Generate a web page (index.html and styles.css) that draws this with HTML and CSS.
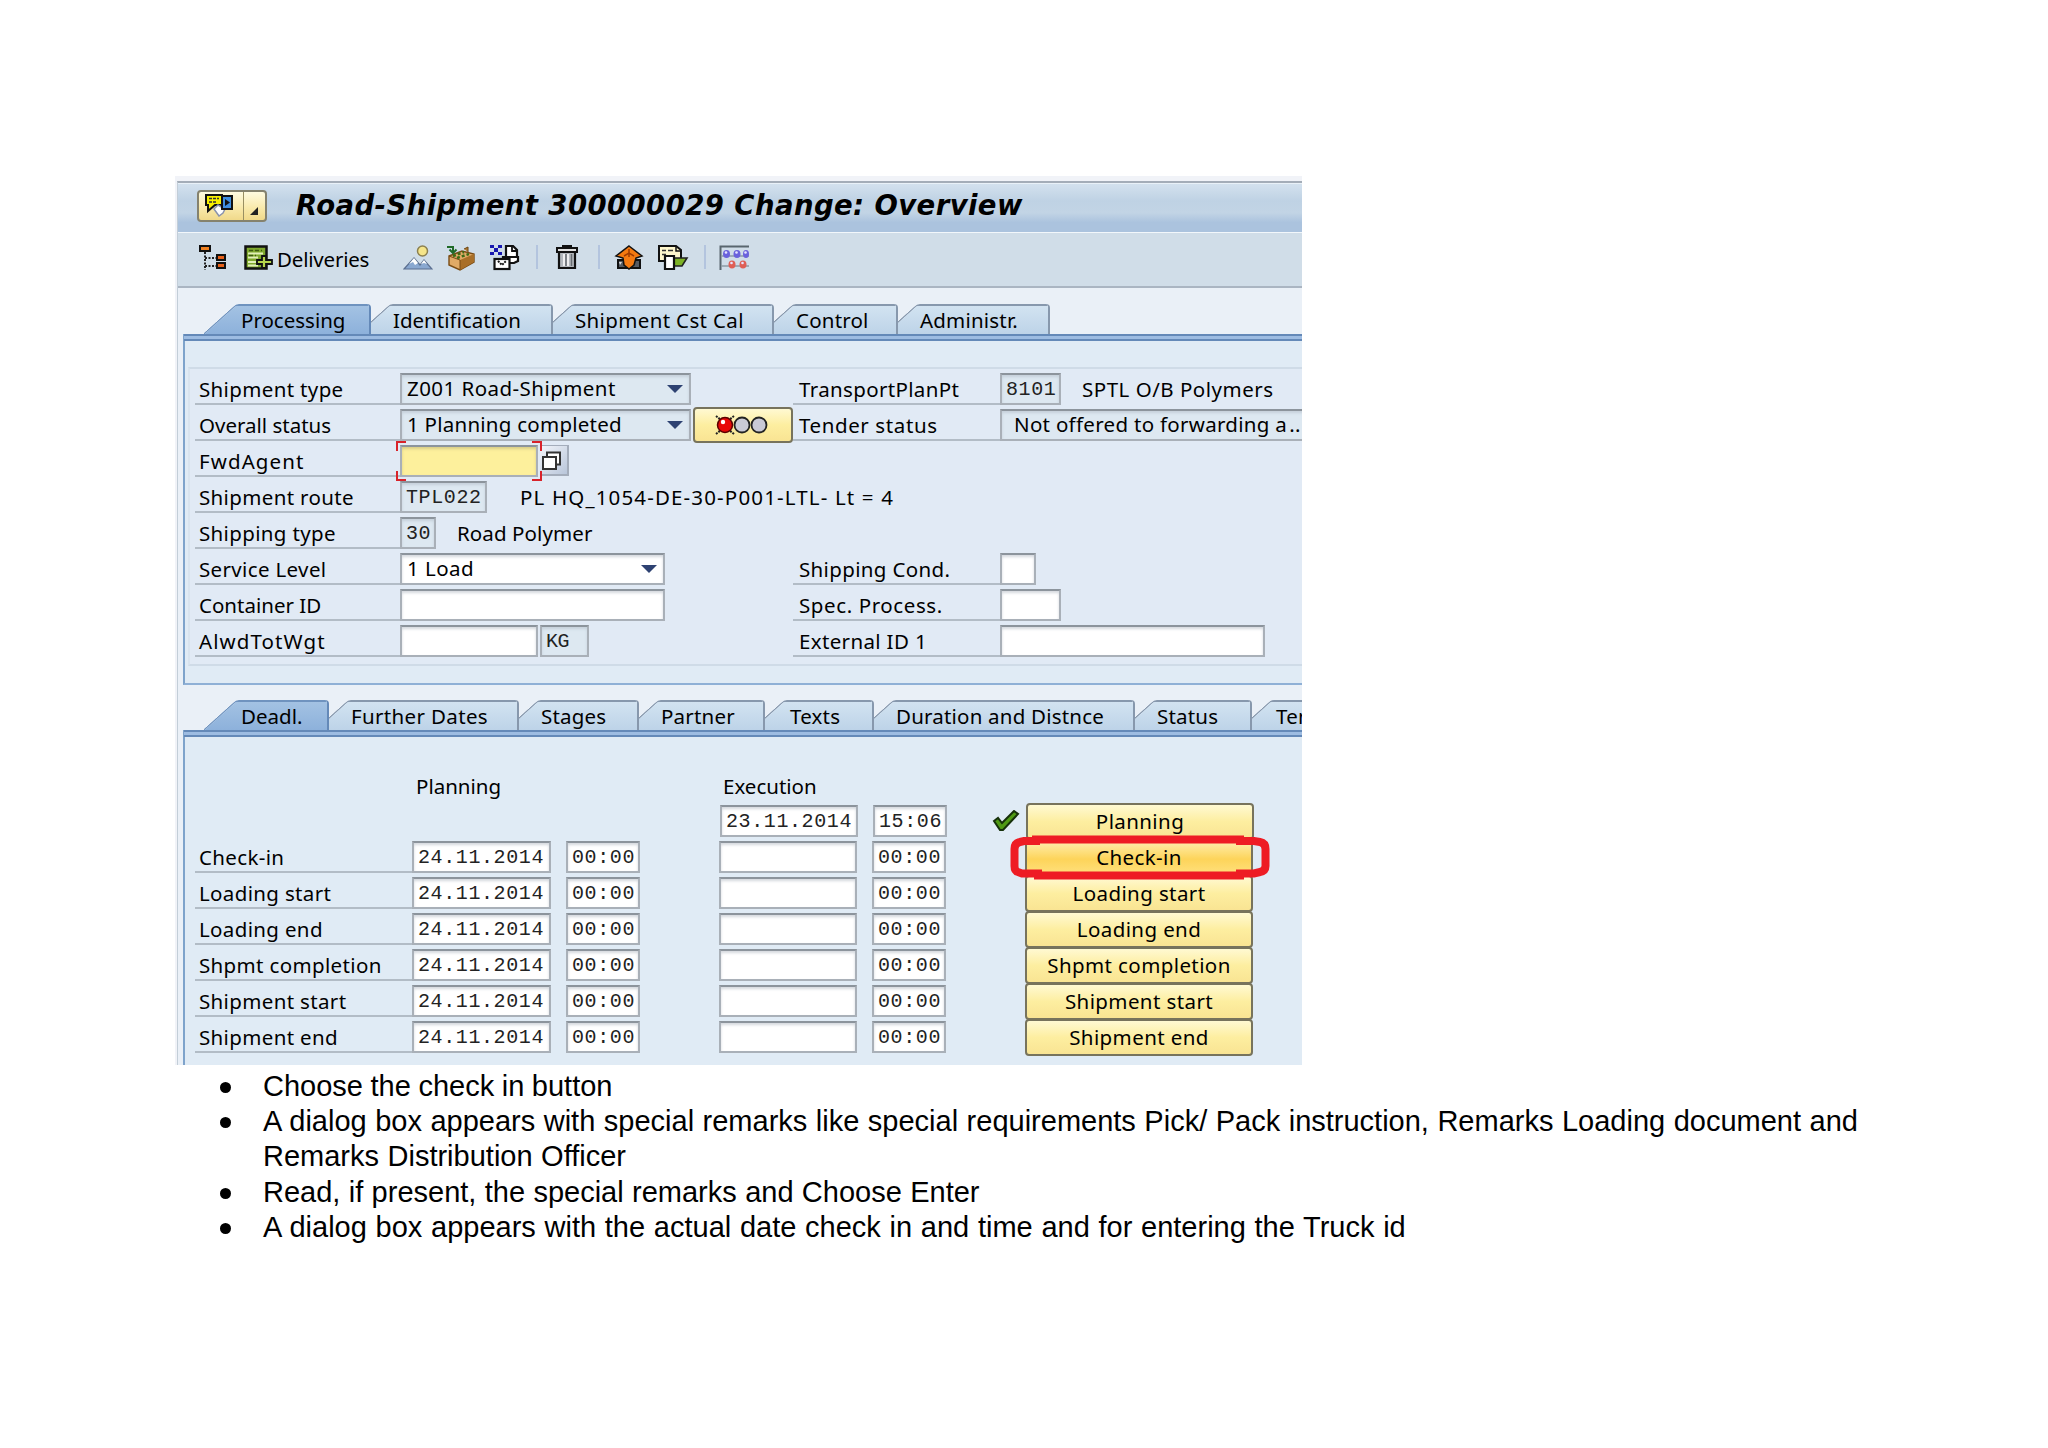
FILE: index.html
```html
<!DOCTYPE html>
<html lang="en">
<head>
    <meta charset="UTF-8">
    <meta name="viewport" content="width=device-width, initial-scale=1.0">
    <title>Road-Shipment 300000029 Change: Overview</title>
    <link rel="stylesheet" href="styles.css">
</head>
<body>
    <div class="screen">
        <div class="window">
            <div class="titlebar">
                <div class="menu-button">
                    <svg class="menu-icon" width="30" height="24" viewBox="0 0 30 24">
                        <path d="M2 2H18V12H11L4 18V12H2Z" fill="#f8f000" stroke="#111" stroke-width="2"/>
                        <path d="M5 5.500H15M5 9H12" stroke="#333" stroke-width="1.500" stroke-dasharray="3 1"/>
                        <path d="M10 16L14 12L21 16L19 20L15 23Z" fill="#fff" stroke="#8a93ad" stroke-width="1.500"/>
                        <rect x="18" y="3" width="10" height="13" fill="#3f8ee0" stroke="#111" stroke-width="2"/>
                        <path d="M21 6V13L26 9.500Z" fill="#111"/>
                    </svg>
                    <span class="menu-corner"><svg width="8" height="8" viewBox="0 0 8 8"><path d="M8 0V8H0Z" fill="#222"/></svg></span>
                </div>
                <h1>Road-Shipment 300000029 Change: Overview</h1>
            </div>

            <div class="toolbar">
                <svg class="icon-tree" width="28" height="26" viewBox="0 0 28 26">
                    <path d="M6 7V25M6 13H18M6 21H18" stroke="#222" stroke-width="2" stroke-dasharray="2 1.500" fill="none"/>
                    <rect x="1" y="1" width="10" height="5" fill="#f08020" stroke="#111" stroke-width="2"/>
                    <rect x="18" y="10" width="8" height="5" fill="#e86018" stroke="#111" stroke-width="2"/>
                    <rect x="18" y="18" width="8" height="5" fill="#e86018" stroke="#111" stroke-width="2"/>
                </svg>
                <svg class="icon-list" width="30" height="26" viewBox="0 0 30 26">
                    <rect x="1.500" y="1.500" width="21" height="22" fill="#7fa82e" stroke="#111" stroke-width="2.500"/>
                    <path d="M4 8.500H19M4 12.500H14M4 17H12M4 20.500H14" stroke="#e2f0b8" stroke-width="2"/>
                    <path d="M5 5.500H18M5 10.500H12" stroke="#3c5c10" stroke-width="1.500" stroke-dasharray="4 2"/>
                    <path d="M18 11H22V15H28V19H22V23H18V19H13V15H18Z" fill="#b5d54c" stroke="#111" stroke-width="1.800"/>
                </svg>
                <span class="tool-text">Deliveries</span>
                <svg class="icon-picture" width="30" height="26" viewBox="0 0 30 26">
                    <circle cx="19.500" cy="6" r="5" fill="#f5e58a" stroke="#8c8050" stroke-width="1.500"/>
                    <path d="M1 24L11 13L17 20L21 15L29 24Z" fill="#8aa8d0" stroke="#5b6f90" stroke-width="1.200"/>
                    <path d="M11 13L6 19L10 17L12 20L15 18ZM21 15L18 19L21 18L24 19Z" fill="#fff"/>
                </svg>
                <svg class="icon-box" width="30" height="26" viewBox="0 0 30 26">
                    <path d="M3 11L16 6L28 9V17L14 25L3 20Z" fill="#e0aa66" stroke="#7a4c14" stroke-width="1.400"/>
                    <path d="M14 15L28 9V17L14 25Z" fill="#a96f28"/>
                    <path d="M3 11L14 15V25" fill="none" stroke="#7a4c14"/>
                    <path d="M7 11L18 7M11 13L23 9" stroke="#3d6b16" stroke-width="2.500" stroke-dasharray="3 2"/>
                    <path d="M18 4L22 2V7" fill="#b07a30" stroke="#6b4410"/>
                    <path d="M1 2H7V7M3.500 4.500L7 8L10.500 4.500" fill="none" stroke="#1f6a28" stroke-width="2"/>
                </svg>
                <svg class="icon-print" width="30" height="26" viewBox="0 0 30 26">
                    <path d="M0 0H4V3H0ZM8 0H12V3H8ZM4 3H8V7H4ZM0 7H4V10H0ZM8 7H12V10H8Z" fill="#1818b0"/>
                    <path d="M16 12V1H23L27 5V12" fill="#fff" stroke="#111" stroke-width="2.200"/>
                    <path d="M22 1V6H27" fill="none" stroke="#111" stroke-width="1.800"/>
                    <path d="M13 12H28V16L24 18H13Z" fill="#fff" stroke="#111" stroke-width="2.200"/>
                    <rect x="4.500" y="14" width="15" height="10" fill="#fff" stroke="#111" stroke-width="2.200"/>
                    <path d="M8 16L12 20L16 16" fill="none" stroke="#111" stroke-width="2" stroke-dasharray="2 1"/>
                </svg>
                <span class="sep sep-a"></span>
                <svg class="icon-trash" width="22" height="26" viewBox="0 0 22 26">
                    <path d="M7 3V1H15V3" fill="none" stroke="#111" stroke-width="2"/>
                    <rect x="1" y="3" width="20" height="4" fill="#e0e0e0" stroke="#111" stroke-width="2"/>
                    <path d="M3 7H19V23H3Z" fill="#b4b8bd" stroke="#111" stroke-width="2.200"/>
                    <path d="M8 9V21M12 9V21" stroke="#f4f4f4" stroke-width="1.800"/>
                    <path d="M10 9V21M15.500 9V21" stroke="#686c72" stroke-width="1.500"/>
                </svg>
                <span class="sep sep-b"></span>
                <svg class="icon-home" width="30" height="26" viewBox="0 0 30 26">
                    <rect x="4" y="15" width="22" height="8" fill="#555b62" stroke="#111" stroke-width="2"/>
                    <path d="M15 1L28 11L22 13L20 20L15 24L10 20L9 13L2 11Z" fill="#f57a10" stroke="#111" stroke-width="1.500"/>
                    <path d="M15 4V12M10 11L15 8L20 11" stroke="#a03c00" stroke-width="1.500" fill="none"/>
                    <path d="M5 17H8L6 20Z" fill="#ddd"/>
                </svg>
                <svg class="icon-copy" width="32" height="26" viewBox="0 0 32 26">
                    <path d="M2 1H19L24 5V16H2Z" fill="#fdf6cc" stroke="#111" stroke-width="2"/>
                    <path d="M19 1V6H24" fill="none" stroke="#111" stroke-width="1.500"/>
                    <path d="M5 5.500H9M5 9.500H9M11 5.500H16" stroke="#333" stroke-width="1.500"/>
                    <path d="M14 13H30L25 21H14Z" fill="#7db226" stroke="#222" stroke-width="1.600"/>
                    <path d="M8 11H17V24H8Z" fill="#fff" stroke="#111" stroke-width="2.200"/>
                </svg>
                <span class="sep sep-c"></span>
                <svg class="icon-abacus" width="30" height="26" viewBox="0 0 30 26">
                    <path d="M1.500 25V1.500H30" fill="none" stroke="#59666e" stroke-width="2"/>
                    <path d="M2 11H30M2 21H30" stroke="#8c9aa4" stroke-width="1.500"/>
                    <g fill="#6a62dc"><ellipse cx="7.500" cy="9" rx="3.500" ry="4"/><ellipse cx="18" cy="9" rx="3.500" ry="4"/><ellipse cx="27" cy="9" rx="3" ry="4"/></g>
                    <g fill="#df5f55"><ellipse cx="13" cy="19.500" rx="3.500" ry="4"/><ellipse cx="24" cy="19.500" rx="3.500" ry="4"/></g>
                    <g fill="#e6e4ff"><circle cx="7" cy="7.500" r="1.300"/><circle cx="17.500" cy="7.500" r="1.300"/><circle cx="26.500" cy="7.500" r="1.300"/><circle cx="12.500" cy="18" r="1.300"/><circle cx="23.500" cy="18" r="1.300"/></g>
                </svg>
            </div>

            <div class="tabs tabs-top">
                <div class="tab active w-processing"><span>Processing</span></div>
                <div class="tab w-ident"><span>Identification</span></div>
                <div class="tab w-cost"><span>Shipment Cst Cal</span></div>
                <div class="tab w-control"><span>Control</span></div>
                <div class="tab w-admin"><span>Administr.</span></div>
            </div>
            <div class="panel panel-top">
                <div class="group">
                    <div class="col col-left">
                        <div class="row">
                            <label>Shipment type</label>
                            <div class="field readonly select w-type">Z001 Road-Shipment</div>
                        </div>
                        <div class="row">
                            <label class="tight">Overall status</label>
                            <div class="field readonly select w-type tight">1 Planning completed</div>
                            <button class="lights">
                                <svg width="54" height="20" viewBox="0 0 54 20">
                                    <circle cx="44" cy="10" r="7.500" fill="#c9c9d6" stroke="#222" stroke-width="1.800"/>
                                    <circle cx="27" cy="10" r="7.500" fill="#c9c9d6" stroke="#222" stroke-width="1.800"/>
                                    <path d="M1 1L6 5M19 1L14 5M1 19L6 15M19 19L14 15" stroke="#222" stroke-width="2" stroke-dasharray="2 1"/>
                                    <circle cx="10" cy="10" r="7.500" fill="#e80808" stroke="#5a0000" stroke-width="1.500"/>
                                    <circle cx="8" cy="7" r="2.200" fill="#fff"/>
                                </svg>
                            </button>
                        </div>
                        <div class="row">
                            <label class="wide">FwdAgent</label>
                            <div class="field focus w-agent">
                                <svg class="brackets" width="146" height="40" viewBox="0 0 146 40"><path d="M1 10V1H10M136 1H145V10M145 30V39H136M10 39H1V30" fill="none" stroke="#d8232a" stroke-width="2"/></svg>
                            </div>
                            <div class="match">
                                <svg width="22" height="20" viewBox="0 0 22 20"><rect x="6" y="1.500" width="13" height="12" fill="#fff" stroke="#333" stroke-width="2"/><rect x="2" y="6" width="13" height="12" fill="#fff" stroke="#333" stroke-width="2"/></svg>
                            </div>
                        </div>
                        <div class="row">
                            <label>Shipment route</label>
                            <div class="field readonly mono w-route">TPL022</div>
                            <span class="desc desc-route">PL HQ_1054-DE-30-P001-LTL- Lt = 4</span>
                        </div>
                        <div class="row">
                            <label>Shipping type</label>
                            <div class="field readonly mono w-two">30</div>
                            <span class="desc desc-road">Road Polymer</span>
                        </div>
                        <div class="row">
                            <label>Service Level</label>
                            <div class="field select w-level">1 Load</div>
                        </div>
                        <div class="row">
                            <label class="tight">Container ID</label>
                            <div class="field w-level"></div>
                        </div>
                        <div class="row">
                            <label class="wide">AlwdTotWgt</label>
                            <div class="field w-agent"></div>
                            <div class="field readonly mono unit">KG</div>
                        </div>
                    </div>
                    <div class="col col-right">
                        <div class="row">
                            <label>TransportPlanPt</label>
                            <div class="field readonly mono w-four">8101</div>
                            <span class="desc desc-plant">SPTL O/B Polymers</span>
                        </div>
                        <div class="row">
                            <label class="spaced">Tender status</label>
                            <div class="field readonly w-tender">Not offered to forwarding a<span class="dots">..</span></div>
                        </div>
                        <div class="row blank"></div>
                        <div class="row blank"></div>
                        <div class="row blank"></div>
                        <div class="row">
                            <label>Shipping Cond.</label>
                            <div class="field w-two"></div>
                        </div>
                        <div class="row">
                            <label class="spaced">Spec. Process.</label>
                            <div class="field w-four"></div>
                        </div>
                        <div class="row">
                            <label>External ID 1</label>
                            <div class="field w-external"></div>
                        </div>
                    </div>
                </div>
            </div>

            <div class="tabs tabs-bottom">
                <div class="tab active w-deadl"><span>Deadl.</span></div>
                <div class="tab w-dates"><span>Further Dates</span></div>
                <div class="tab w-stages"><span>Stages</span></div>
                <div class="tab w-partner"><span>Partner</span></div>
                <div class="tab w-texts"><span>Texts</span></div>
                <div class="tab w-duration"><span>Duration and Distnce</span></div>
                <div class="tab w-status"><span>Status</span></div>
                <div class="tab w-tender-tab"><span>Tender</span></div>
            </div>
            <div class="panel panel-bottom">
                <div class="headings">
                    <span>Planning</span>
                    <span>Execution</span>
                </div>
                <div class="deadline">
                    <label class="no-label"></label>
                    <div class="no-plan"></div>
                    <div class="field mono date exec">23.11.2014</div>
                    <div class="field mono time">15:06</div>
                    <svg class="check" width="28" height="22" viewBox="0 0 28 22"><path d="M2 11L6 8L10 13L22 1L26 4L11 20H8Z" fill="#4f9a14" stroke="#16300a" stroke-width="2"/></svg>
                    <button class="action">Planning</button>
                </div>
                <div class="deadline">
                    <label>Check-in</label>
                    <div class="field mono date plan">24.11.2014</div>
                    <div class="field mono time">00:00</div>
                    <div class="field mono date exec"></div>
                    <div class="field mono time">00:00</div>
                    <button class="action hover">Check-in</button>
                    <svg class="marker" width="260" height="45" viewBox="0 0 260 45"><path d="M26 4.500H230V6H244L250 7Q255.500 8 255.500 14V31Q255.500 36 250 37L244 38.500H230V40.500H28V38.500H12L8 37Q4.500 36 4.500 31V14Q4.500 8 10 7L14 6H26Z" fill="none" stroke="#ee1c24" stroke-width="8"/></svg>
                </div>
                <div class="deadline">
                    <label>Loading start</label>
                    <div class="field mono date plan">24.11.2014</div>
                    <div class="field mono time">00:00</div>
                    <div class="field mono date exec"></div>
                    <div class="field mono time">00:00</div>
                    <button class="action">Loading start</button>
                </div>
                <div class="deadline">
                    <label>Loading end</label>
                    <div class="field mono date plan">24.11.2014</div>
                    <div class="field mono time">00:00</div>
                    <div class="field mono date exec"></div>
                    <div class="field mono time">00:00</div>
                    <button class="action">Loading end</button>
                </div>
                <div class="deadline">
                    <label>Shpmt completion</label>
                    <div class="field mono date plan">24.11.2014</div>
                    <div class="field mono time">00:00</div>
                    <div class="field mono date exec"></div>
                    <div class="field mono time">00:00</div>
                    <button class="action">Shpmt completion</button>
                </div>
                <div class="deadline">
                    <label>Shipment start</label>
                    <div class="field mono date plan">24.11.2014</div>
                    <div class="field mono time">00:00</div>
                    <div class="field mono date exec"></div>
                    <div class="field mono time">00:00</div>
                    <button class="action">Shipment start</button>
                </div>
                <div class="deadline">
                    <label>Shipment end</label>
                    <div class="field mono date plan">24.11.2014</div>
                    <div class="field mono time">00:00</div>
                    <div class="field mono date exec"></div>
                    <div class="field mono time">00:00</div>
                    <button class="action">Shipment end</button>
                </div>
            </div>
        </div>
    </div>

    <ul class="steps">
        <li class="step-choose">Choose the check in button</li>
        <li class="step-remarks">A dialog box appears with special remarks like special requirements Pick/ Pack instruction, Remarks Loading document and<br>Remarks Distribution Officer</li>
        <li class="step-read">Read, if present, the special remarks and Choose Enter</li>
        <li class="step-truck">A dialog box appears with the actual date check in and time and for entering the Truck id</li>
    </ul>
</body>
</html>
```

FILE: styles.css
```css
*,
*::before,
*::after {
    box-sizing: border-box;
}

body {
    margin: 0;
    background: #fff;
    color: #000;
    font-family: "Noto Sans", sans-serif;
    font-size: 20.5px;
}

svg {
    display: block;
    flex: none;
}

.screen {
    margin: 176px 0 0 175px;
    width: 1127px;
    height: 889px;
    padding-top: 5px;
    background: #f1f3f8;
    overflow: hidden;
}

.window {
    height: 884px;
    margin-left: 2px;
    border-top: 2px solid #a4adb8;
    border-left: 1px solid #c3ced8;
    background: #eaf0f7;
    overflow: hidden;
}

/* Title bar */
.titlebar {
    display: flex;
    align-items: flex-start;
    height: 49px;
    padding: 6px 0 0 19px;
    background: linear-gradient(#d3e1ee, #bfd2e4 35%, #c2d4e5 60%, #abc3de 80%, #abc3de);
    border-top: 1px solid #e9f1f8;
}

.menu-button {
    display: flex;
    width: 70px;
    height: 32px;
    border: 2px solid #85826e;
    border-radius: 4px;
    background: linear-gradient(#fffbe0, #f8e8a8 60%, #f0d98a);
}

.menu-icon {
    margin: 1px 0 0 5px;
}

.menu-corner {
    display: flex;
    align-items: flex-end;
    justify-content: flex-end;
    width: 20px;
    height: 28px;
    margin-left: 9px;
    padding: 0 5px 5px 0;
    border-left: 1px solid #998f62;
}

h1 {
    margin: 1px 0 0 29px;
    font-family: "DejaVu Sans", Verdana, sans-serif;
    font-size: 27.5px;
    font-weight: bold;
    font-style: italic;
    letter-spacing: 0.42px;
    line-height: 28px;
    white-space: nowrap;
}

/* Toolbar */
.toolbar {
    display: flex;
    align-items: flex-start;
    height: 56px;
    padding: 12px 0 0 21px;
    background: #d0dde8;
    border-top: 1px solid #f2f7fb;
    border-bottom: 2px solid #aab5c2;
}

.icon-list { margin-left: 17px; }
.icon-picture { margin-left: 34px; }
.icon-box { margin-left: 13px; }
.icon-print { margin-left: 14px; }
.icon-trash { margin-left: 18px; }
.icon-home { margin-left: 14px; }
.icon-copy { margin-left: 13px; }
.icon-abacus { margin-left: 13px; }

.tool-text {
    width: 92px;
    margin-left: 3px;
    letter-spacing: -0.2px;
    line-height: 28px;
}

.sep {
    width: 2px;
    height: 24px;
    background: #b3c4de;
}

.sep-a { margin-left: 16px; }
.sep-b { margin-left: 20px; }
.sep-c { margin-left: 15px; }

/* Tabs */
.tabs {
    display: flex;
    padding-left: 26px;
    height: 30px;
}

.tabs-top {
    margin-top: 16px;
}

.tabs-bottom {
    margin-top: 15px;
}

.tab {
    position: relative;
    flex: none;
    height: 30px;
    overflow: hidden;
    border-right: 2px solid #8798ad;
    border-top-right-radius: 4px;
    padding-left: 22px;
    line-height: 33px;
    white-space: nowrap;
    letter-spacing: 0.2px;
}

.tab::before {
    content: "";
    position: absolute;
    inset: 0 -40px 0 19px;
    border-top: 2px solid #8798ad;
    border-left: 2px solid #8798ad;
    border-top-left-radius: 3px;
    background: linear-gradient(#d2e3f1, #bdd3e8);
    transform: skewX(-48deg);
    transform-origin: top left;
}

.tab span {
    position: relative;
}

.tab.active {
    padding-left: 37px;
    border-color: #6489b8;
    letter-spacing: 0;
}

.tab.active::before {
    left: 32px;
    border-color: #6f93bf;
    background: linear-gradient(#a3c2e3, #8db1db);
}

.w-processing { width: 167px; }
.w-ident { width: 182px; letter-spacing: 0; }
.w-cost { width: 221px; letter-spacing: 0.35px; }
.w-control { width: 124px; }
.w-admin { width: 152px; }
.w-deadl { width: 125px; }
.w-dates { width: 190px; letter-spacing: 0.35px; }
.w-stages { width: 120px; }
.w-partner { width: 126px; }
.w-texts { width: 109px; padding-left: 25px; }
.w-duration { width: 261px; }
.w-status { width: 117px; }
.w-tender-tab { width: 140px; padding-left: 24px; }

/* Panels */
.panel {
    margin-left: 5px;
    border-left: 2px solid #7ea3cb;
    background: #e0ebf5;
}

.panel::before {
    content: "";
    display: block;
    height: 7px;
    margin-left: -1px;
    border-top: 2px solid #6489b8;
    border-bottom: 2px solid #6489b8;
    background: #9dbce2;
}

.panel-top {
    height: 351px;
    border-bottom: 2px solid #8fb0d6;
}

.panel-bottom {
    height: 340px;
}

.group {
    display: flex;
    height: 299px;
    margin: 26px 0 0 3px;
    padding: 4px 0 0 5px;
    border-top: 2px solid #cfdbe7;
    border-bottom: 2px solid #cfdbe7;
    border-left: 2px solid #d8e3ee;
    background: #e1eaf5;
}

.col-left {
    width: 598px;
}

.col-right {
    flex: 1;
    overflow: hidden;
}

.row {
    display: flex;
    height: 36px;
}

label {
    flex: none;
    width: 205px;
    height: 32px;
    padding-left: 4px;
    border-bottom: 2px solid #b2bcc6;
    line-height: 33px;
    letter-spacing: 0.35px;
    white-space: nowrap;
}

.col-right label {
    width: 207px;
    padding-left: 6px;
}

.tight { letter-spacing: 0; }
.spaced { letter-spacing: 0.6px; }
.wide, .row .wide { letter-spacing: 1.1px; }

.field {
    flex: none;
    height: 32px;
    padding-left: 5px;
    border: 2px solid #a9b0b8;
    border-top-color: #8c949c;
    background: #fff;
    box-shadow: inset 0 2px 3px #d4d8de;
    line-height: 27px;
    letter-spacing: 0.45px;
    white-space: nowrap;
}

.readonly {
    background: #dde8f1;
    box-shadow: inset 0 2px 3px #c5d0da;
}

.mono {
    padding-left: 4px;
    font-family: "Liberation Mono", monospace;
    font-size: 20px;
    letter-spacing: 0.6px;
    line-height: 30px;
    color: #222;
}

/* Drop-down arrow at the right end */
.select {
    display: flex;
    justify-content: space-between;
    padding-right: 6px;
}

.select::after {
    content: "";
    width: 16px;
    height: 8px;
    margin-top: 10px;
    background: #2e4272;
    clip-path: polygon(0 0, 100% 0, 50% 100%);
}

.field.tight { letter-spacing: 0.25px; }
.w-type { width: 291px; }
.w-agent { width: 138px; }
.w-route { width: 87px; }
.w-two { width: 36px; }
.w-level { width: 265px; }
.w-four { width: 61px; }
.w-external { width: 265px; }

.w-tender {
    width: 320px;
    padding-left: 12px;
    letter-spacing: 0.3px;
}

.dots {
    margin-left: 2px;
}

.unit {
    width: 49px;
    margin-left: 2px;
    letter-spacing: -0.5px;
}

.focus {
    position: relative;
    background: #fdf09c;
    box-shadow: inset 0 2px 3px #d8cc88;
}

.brackets {
    position: absolute;
    top: -6px;
    left: -6px;
}

.match {
    width: 29px;
    height: 31px;
    margin-left: 2px;
    padding: 5px 0 0 1px;
    border: solid #a4adbb;
    border-width: 1px 2px 2px 0;
    background: linear-gradient(135deg, #f2f5fa, #b9c6da);
}

.desc {
    line-height: 33px;
    white-space: nowrap;
}

.desc-route { margin-left: 33px; letter-spacing: 1.15px; }
.desc-road { margin-left: 21px; letter-spacing: 0.1px; }
.desc-plant { margin-left: 21px; letter-spacing: 0.5px; }

button {
    padding: 0;
    border: 2px solid #77735c;
    border-radius: 4px;
    background: linear-gradient(#fff9d2, #fdeea0 50%, #f9e493);
    color: #000;
    font: inherit;
}

.lights {
    display: flex;
    align-items: center;
    width: 100px;
    height: 36px;
    margin: -2px 0 0 2px;
    padding-left: 20px;
}

/* Deadlines */
.headings {
    display: flex;
    height: 68px;
    padding: 33px 0 0 231px;
    line-height: 32px;
}

.headings span {
    width: 307px;
}

.deadline {
    position: relative;
    display: flex;
    height: 36px;
    padding-left: 10px;
}

.deadline label {
    width: 217px;
}

.deadline .no-label {
    border: none;
}

.no-plan {
    width: 229px;
}

.date { width: 138px; }
.plan { width: 139px; }
.time { width: 74px; margin-left: 15px; }
.exec { margin-left: 79px; }

.check {
    margin: 5px 0 0 45px;
}

.action {
    width: 228px;
    height: 37px;
    margin: -2px 0 0 79px;
    line-height: 33px;
    letter-spacing: 0.4px;
}

.check + .action {
    margin-left: 6px;
}

.hover {
    background: linear-gradient(#ffefb0, #fdd45a 55%, #ffe07c);
}

.marker {
    position: absolute;
    top: -6px;
    left: 825px;
    z-index: 1;
}

/* Instructions under the screen */
.steps {
    margin: 4px 0 0 263px;
    padding: 0;
    list-style: none;
    font-family: "Liberation Sans", Arial, sans-serif;
    font-size: 29px;
    line-height: 35.2px;
    white-space: nowrap;
}

.steps li::before {
    content: "";
    float: left;
    width: 11px;
    height: 11px;
    margin: 13px 0 0 -43px;
    border-radius: 50%;
    background: #000;
}

.step-choose { word-spacing: -0.5px; }
.step-remarks { word-spacing: 0.45px; }
.step-read { word-spacing: 0.3px; }
.step-truck { word-spacing: 0.65px; }
```
